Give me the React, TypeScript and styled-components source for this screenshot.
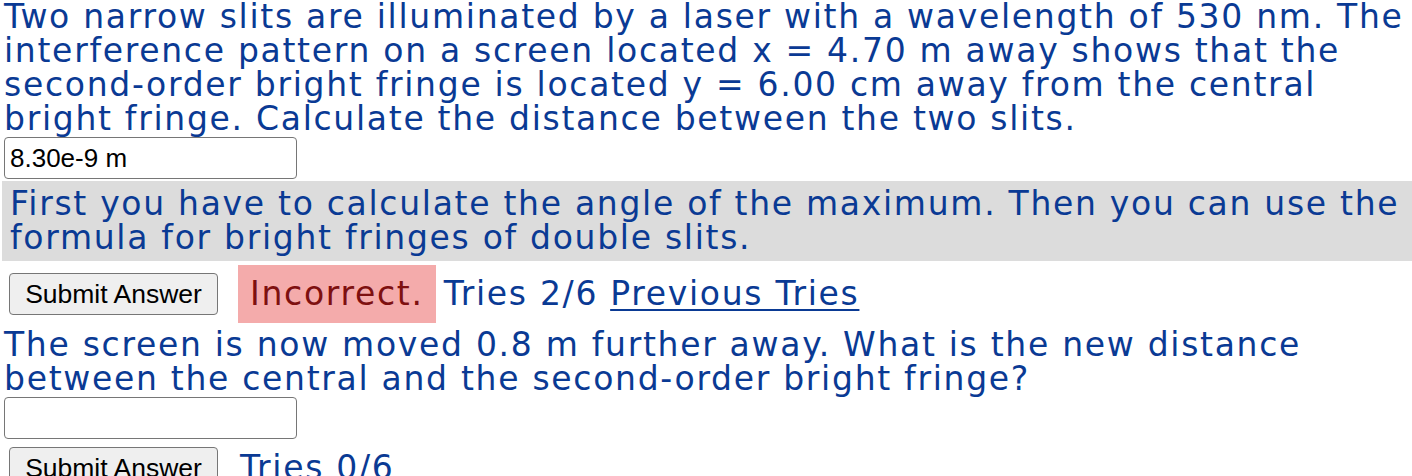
import styled, { createGlobalStyle } from "styled-components";

const GlobalStyle = createGlobalStyle`
  html, body {
    margin: 0;
    padding: 0;
    background: #ffffff;
    overflow: hidden;
  }
`;

const Page = styled.div`
  padding: 0 0 0 2px;
  font-family: "DejaVu Sans", Verdana, sans-serif;
  font-size: 33px;
  line-height: 34px;
  letter-spacing: 1.7px;
  color: #0a3a94;
  white-space: nowrap;
`;

const Question = styled.div`
  padding-left: 2px;
`;

const AnswerInput = styled.input`
  display: block;
  box-sizing: border-box;
  width: 293px;
  height: 42px;
  margin: 1px 0 0 2px;
  padding: 0 5px;
  border: 1.5px solid #767676;
  border-radius: 4px;
  font-family: "Liberation Sans", Arial, sans-serif;
  font-size: 26px;
  letter-spacing: 0;
  color: #000000;
  background: #ffffff;
`;

const Hint = styled.div`
  margin-top: 2px;
  padding: 6px 8px;
  background: #dcdcdc;
`;

const SubmitRow = styled.div<{ $top: number }>`
  display: flex;
  align-items: center;
  margin-top: ${({ $top }) => $top}px;
  padding-left: 7px;
`;

const SubmitButton = styled.button`
  box-sizing: border-box;
  width: 209px;
  height: 42px;
  padding: 0;
  border: 1.5px solid #767676;
  border-radius: 4px;
  background: #efefef;
  font-family: "Liberation Sans", Arial, sans-serif;
  font-size: 26.5px;
  letter-spacing: 0;
  color: #000000;
  margin-right: 20px;
`;

const Incorrect = styled.span`
  display: inline-block;
  padding: 12px 12px;
  background: #f4abab;
  color: #7e1010;
`;

const Tries = styled.span<{ $gap: number }>`
  margin-left: ${({ $gap }) => $gap}px;
`;

const PrevLink = styled.a`
  margin-left: 12px;
  color: #0a3a94;
  text-decoration: underline;
  text-decoration-thickness: 2px;
  text-underline-offset: 4px;
`;

const FollowUp = styled.div`
  margin-top: 5px;
  padding-left: 2px;
`;

export default function App() {
  return (
    <Page>
      <GlobalStyle />
      <Question>
        Two narrow slits are illuminated by a laser with a wavelength of 530 nm. The
        <br />
        interference pattern on a screen located x = 4.70 m away shows that the
        <br />
        second-order bright fringe is located y = 6.00 cm away from the central
        <br />
        bright fringe. Calculate the distance between the two slits.
      </Question>
      <AnswerInput defaultValue="8.30e-9 m" />
      <Hint>
        First you have to calculate the angle of the maximum. Then you can use the
        <br />
        formula for bright fringes of double slits.
      </Hint>
      <SubmitRow $top={4}>
        <SubmitButton>Submit Answer</SubmitButton>
        <Incorrect>Incorrect.</Incorrect>
        <Tries $gap={8}>Tries 2/6</Tries>
        <PrevLink href="#">Previous Tries</PrevLink>
      </SubmitRow>
      <FollowUp>
        The screen is now moved 0.8 m further away. What is the new distance
        <br />
        between the central and the second-order bright fringe?
      </FollowUp>
      <AnswerInput />
      <SubmitRow $top={8}>
        <SubmitButton>Submit Answer</SubmitButton>
        <Tries $gap={2}>Tries 0/6</Tries>
      </SubmitRow>
    </Page>
  );
}
